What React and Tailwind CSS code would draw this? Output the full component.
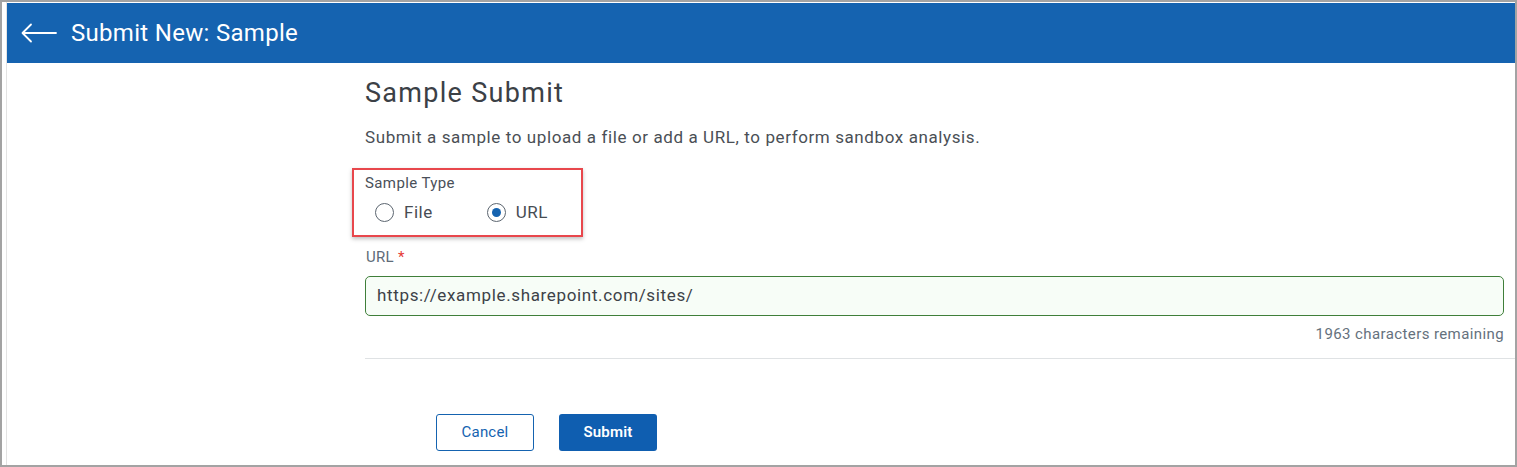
export default function App() {
  return (
    <div className="h-[467px] w-[1517px] overflow-hidden border-2 border-[#a3a3a3] bg-white font-['Roboto',sans-serif]">
      <div className="flex h-full border-l-4 border-white">
        <div className="flex h-full flex-1 flex-col border-l border-[#e3e3e3]">
          <div className="mt-px flex h-[60px] items-center gap-[14px] bg-[#1563b0] pl-[14px] text-white">
            <svg width="36" height="20" viewBox="0 0 36 20" fill="none" stroke="white" strokeWidth="1.8" strokeLinecap="round" strokeLinejoin="round">
              <path d="M35 10H2" />
              <path d="M10 1.5L1.5 10L10 18.5" />
            </svg>
            <span className="text-[24px] font-normal tracking-[0.3px]">Submit New: Sample</span>
          </div>
          <div className="flex flex-1">
            <div className="w-[358px]" />
            <div className="flex flex-1 flex-col text-[#3d4248]">
              <h1 className="mt-[14px] text-[27px] leading-[32px] tracking-[1.3px] text-[#3b4046]">Sample Submit</h1>
              <p className="mt-[18px] text-[17px] leading-[20px] tracking-[0.6px] text-[#4a4f55]">
                Submit a sample to upload a file or add a URL, to perform sandbox analysis.
              </p>
              <div className="-ml-[13px] mt-[21px] w-[231px] border-[2.5px] border-[#e8474c] pb-[13px] pl-[11px] pt-[4px] shadow-[0_2px_4px_rgba(0,0,0,0.25)]">
                <div className="text-[15px] leading-[18px] tracking-[0.4px] text-[#4a5059]">Sample Type</div>
                <div className="mt-[10px] flex items-center">
                  <label className="flex items-center gap-[10px] pl-[10px]">
                    <span className="h-[19px] w-[19px] rounded-full border-[1.5px] border-[#5c6670] bg-white" />
                    <span className="text-[17px] leading-[20px] tracking-[0.5px] text-[#474c53]">File</span>
                  </label>
                  <label className="ml-[54px] flex items-center gap-[10px]">
                    <span className="flex h-[19px] w-[19px] items-center justify-center rounded-full border-[1.5px] border-[#5c6670] bg-white">
                      <span className="h-[9px] w-[9px] rounded-full bg-[#1563b0]" />
                    </span>
                    <span className="text-[17px] leading-[20px] tracking-[0.5px] text-[#474c53]">URL</span>
                  </label>
                </div>
              </div>
              <div className="mt-[11px] pl-px text-[15px] leading-[18px] tracking-[0.3px] text-[#5e6b78]">
                URL <span className="text-[#e53935]">*</span>
              </div>
              <div className="mr-[11px] mt-[10px] flex h-[40px] items-center rounded-[5px] border border-[#3f7f3a] bg-[#f7fdf7] pl-[11px] text-[17px] tracking-[0.65px] text-[#3d4248]">
                https://example.sharepoint.com/sites/
              </div>
              <div className="mr-[11px] mt-[9px] text-right text-[15px] leading-[18px] tracking-[0.4px] text-[#65717d]">
                1963 characters remaining
              </div>
              <div className="mt-[15px] border-t border-[#dfe2e4]" />
              <div className="ml-[71px] mt-[55px] flex gap-[25px]">
                <button className="h-[37px] w-[98px] rounded-[3px] border border-[#1563b0] bg-white text-[15px] tracking-[0.2px] text-[#1563b0]">
                  Cancel
                </button>
                <button className="h-[37px] w-[98px] rounded-[3px] bg-[#0f5eb0] text-[15px] font-semibold tracking-[0.2px] text-white">
                  Submit
                </button>
              </div>
            </div>
          </div>
        </div>
      </div>
    </div>
  );
}
